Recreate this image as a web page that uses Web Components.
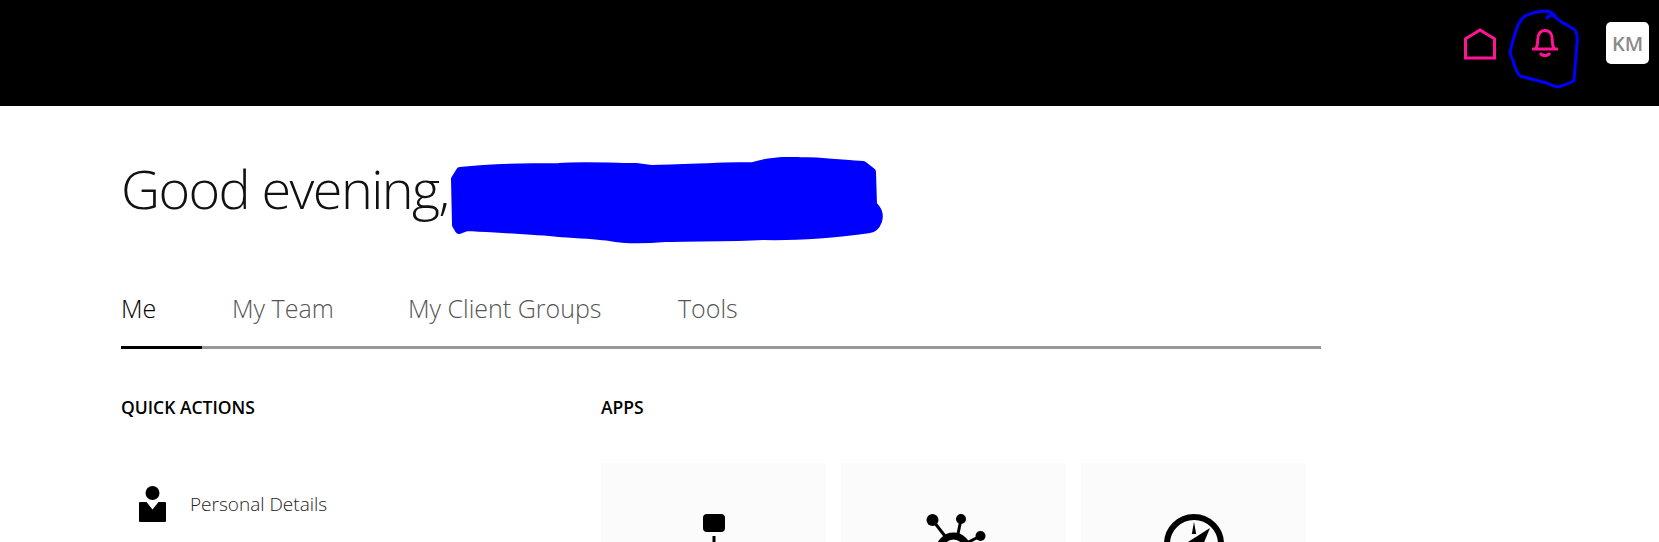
<!DOCTYPE html>
<html lang="en">
<head>
<meta charset="utf-8">
<title>Home</title>
<style>
    html, body { margin: 0; height: 100%; overflow: hidden; background: #fff; }
    body { font-family: "Open Sans", "Noto Sans", sans-serif; color: #000; }
    .content { display: block; padding-left: 121px; width: 1200px; }
    .columns { display: grid; grid-template-columns: 480px 1fr; }
</style>
</head>
<body>
<app-header initials="KM"></app-header>
<div class="content">
    <greeting-title>Good evening,</greeting-title>
    <tab-bar>
        <tab-item active>Me</tab-item>
        <tab-item style="--tab-width:176px">My Team</tab-item>
        <tab-item style="--tab-width:270px">My Client Groups</tab-item>
        <tab-item>Tools</tab-item>
    </tab-bar>
    <div class="columns">
        <section-block heading="QUICK ACTIONS">
            <quick-action>
                <svg slot="icon" width="27" height="36" viewBox="0 0 27 36" fill="#000">
                    <circle cx="13.5" cy="7" r="7"/>
                    <path d="M1 16h6.5l6 7.5 6-7.5H26a1 1 0 0 1 1 1v18a1 1 0 0 1-1 1H1a1 1 0 0 1-1-1V17a1 1 0 0 1 1-1z"/>
                </svg>
                Personal Details
            </quick-action>
        </section-block>
        <section-block heading="APPS">
            <div style="display:flex;gap:15px">
                <app-card>
                    <svg width="60" height="62" viewBox="0 0 60 62" fill="#000">
                        <rect x="19" y="0" width="22" height="18" rx="4"/>
                        <rect x="28.5" y="22" width="3" height="40"/>
                    </svg>
                </app-card>
                <app-card>
                    <svg width="70" height="62" viewBox="0 0 70 62" fill="#000" stroke="#000">
                        <circle cx="13.5" cy="6" r="6" stroke="none"/>
                        <circle cx="42" cy="5" r="5" stroke="none"/>
                        <circle cx="61.5" cy="22" r="5" stroke="none"/>
                        <path d="M13.500 6l14 18M42 5l-4 20M61.500 22l-18 9" stroke-width="3" fill="none"/>
                        <circle cx="34.500" cy="36" r="14" fill="#fbfbfb" stroke-width="7"/>
                    </svg>
                </app-card>
                <app-card>
                    <svg width="64" height="62" viewBox="0 0 64 62" fill="#000">
                        <circle cx="32" cy="30" r="27" fill="none" stroke="#000" stroke-width="6"/>
                        <path d="M32 8l2.200 12h-4.400z"/>
                        <path d="M48 14L38 38 26 28z"/>
                    </svg>
                </app-card>
            </div>
        </section-block>
    </div>
</div>
<script>
class AppHeader extends HTMLElement {
    constructor() {
        super();
        this.attachShadow({ mode: 'open' });
        this.shadowRoot.innerHTML = `
            <style>
                :host { display: flex; position: relative; height: 106px; box-sizing: border-box; padding: 22px 10px 0 0; background: #000; justify-content: flex-end; align-items: flex-start; }
                .icon { display: block; margin-top: 6px; }
                .home { margin-right: 36px; }
                .bell { margin-top: 7px; margin-right: 48px; }
                .avatar { width: 43px; height: 42px; background: #fff; border-radius: 5px; color: #8a8a8a; font: 600 20px "Open Sans", sans-serif; display: flex; align-items: center; justify-content: center; }
                .scribble { position: absolute; left: 1505px; top: 8px; }
            </style>
            <svg class="icon home" width="32" height="32" viewBox="0 0 32 32" fill="none" stroke="#ff1493" stroke-width="3">
                <path d="M1.500 30V10.800L16 2l14.500 8.800V30z"/>
            </svg>
            <svg class="icon bell" width="26" height="29" viewBox="0 0 26 29" fill="none" stroke="#ff1493" stroke-width="3" stroke-linecap="round">
                <path d="M1 20h24M3.500 20c1.500-2 2.200-4 2.200-9C5.700 5 8.500 1.500 13 1.500S20.300 5 20.300 11c0 5 .7 7 2.200 9"/>
                <path d="M8.800 25c2.300 2 6.100 2 8.400 0"/>
            </svg>
            <div class="avatar">${this.getAttribute('initials')}</div>
            <svg class="scribble" width="80" height="82" viewBox="0 0 80 82" fill="none" stroke="#0000ff" stroke-width="3" stroke-linejoin="round" stroke-linecap="round">
                <path d="M42 10Q46 5 50 9 55 14 62 17L70 22Q73 27 72 35L69 73Q60 77 53 79 47 78 42 75 26 71 15 68 10 62 8 52 4 46 6 40 9 28 13 17 16 11 20 8 30 3 42 3 47 4 50 8"/>
            </svg>
        `;
    }
}

class GreetingTitle extends HTMLElement {
    constructor() {
        super();
        this.attachShadow({ mode: 'open' });
        this.shadowRoot.innerHTML = `
            <style>
                :host { display: block; position: relative; padding-top: 44px; height: 129px; }
                h1 { margin: 0; font-size: 54px; letter-spacing: -1.600px; font-weight: 300; line-height: 76px; color: #111; }
                svg { position: absolute; left: 329px; top: 51px; }
            </style>
            <h1><slot></slot></h1>
            <svg width="436" height="88" viewBox="0 0 436 88" fill="#0000ff" stroke="#0000ff" stroke-width="8" stroke-linejoin="round">
                <path d="M10 14C40 11 80 10 109 10 130 8 170 10 186 10L201 12C240 11 280 9 303 9 315 5 335 3 349 4 370 4 395 7 413 8L422 15 423 48C428 52 430 58 428 64 426 70 422 72 420 72 390 76 350 80 313 79 280 81 240 80 215 81 190 83 170 82 160 80 145 78 125 77 109 76 80 73 50 72 17 70L9 73 6 68 5 22z"/>
            </svg>
        `;
    }
}

class TabBar extends HTMLElement {
    constructor() {
        super();
        this.attachShadow({ mode: 'open' });
        this.shadowRoot.innerHTML = `
            <style>
                :host { display: flex; align-items: flex-start; border-bottom: 3px solid #989898; height: 70px; box-sizing: border-box; }
            </style>
            <slot></slot>
        `;
    }
}

class TabItem extends HTMLElement {
    constructor() {
        super();
        this.attachShadow({ mode: 'open' });
        this.shadowRoot.innerHTML = `
            <style>
                :host { display: block; box-sizing: border-box; width: var(--tab-width, 81px); height: 70px; padding-top: 12px; font-size: 25px; font-weight: 300; line-height: 34px; color: #555; }
                :host([active]) { width: 81px; margin-right: 30px; color: #000; border-bottom: 3px solid #000; }
            </style>
            <slot></slot>
        `;
    }
}

class SectionBlock extends HTMLElement {
    constructor() {
        super();
        this.attachShadow({ mode: 'open' });
        this.shadowRoot.innerHTML = `
            <style>
                :host { display: block; padding-top: 46px; }
                h2 { margin: 0 0 44px; font-size: 17.500px; font-weight: 600; line-height: 24px; color: #000; }
            </style>
            <h2>${this.getAttribute('heading')}</h2>
            <slot></slot>
        `;
    }
}

class QuickAction extends HTMLElement {
    constructor() {
        super();
        this.attachShadow({ mode: 'open' });
        this.shadowRoot.innerHTML = `
            <style>
                :host { display: flex; align-items: center; gap: 24px; padding: 23px 0 0 18px; font-size: 19px; font-weight: 300; color: #222; }
            </style>
            <slot name="icon"></slot>
            <span><slot></slot></span>
        `;
    }
}

class AppCard extends HTMLElement {
    constructor() {
        super();
        this.attachShadow({ mode: 'open' });
        this.shadowRoot.innerHTML = `
            <style>
                :host { display: flex; justify-content: center; align-items: flex-start; box-sizing: border-box; width: 225px; height: 225px; padding-top: 51px; background: #fbfbfb; }
            </style>
            <slot></slot>
        `;
    }
}

customElements.define('app-header', AppHeader);
customElements.define('greeting-title', GreetingTitle);
customElements.define('tab-bar', TabBar);
customElements.define('tab-item', TabItem);
customElements.define('section-block', SectionBlock);
customElements.define('quick-action', QuickAction);
customElements.define('app-card', AppCard);
</script>
</body>
</html>
